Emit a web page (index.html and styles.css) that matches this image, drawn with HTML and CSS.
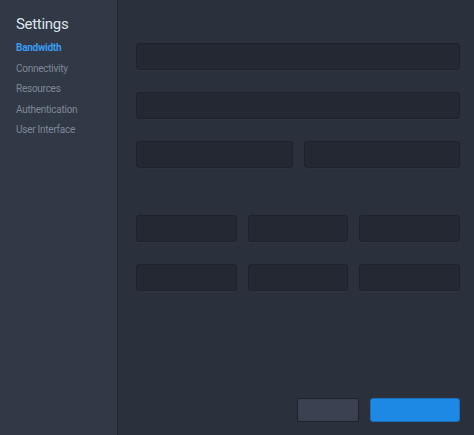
FILE: index.html
```html
<!DOCTYPE html>
<html>
<head>
<meta charset="utf-8">
<link rel="stylesheet" href="styles.css">
</head>
<body>
<div class="app">
  <aside class="sidebar">
    <h1 class="title">Settings</h1>
    <nav class="nav">
      <a class="nav-item active">Bandwidth</a>
      <a class="nav-item">Connectivity</a>
      <a class="nav-item">Resources</a>
      <a class="nav-item">Authentication</a>
      <a class="nav-item">User Interface</a>
    </nav>
  </aside>
  <main class="main">
    <div class="form">
      <div class="field"></div>
      <div class="field"></div>
      <div class="row two">
        <div class="field"></div>
        <div class="field"></div>
      </div>
      <div class="row three section">
        <div class="field"></div>
        <div class="field"></div>
        <div class="field"></div>
      </div>
      <div class="row three">
        <div class="field"></div>
        <div class="field"></div>
        <div class="field"></div>
      </div>
    </div>
    <div class="actions">
      <button class="btn cancel"></button>
      <button class="btn save"></button>
    </div>
  </main>
</div>
</body>
</html>
```
FILE: styles.css
```css
html, body {
  margin: 0;
  padding: 0;
  background: #2a303c;
  font-family: Roboto, "Liberation Sans", sans-serif;
}
.app {
  display: flex;
  width: 474px;
  height: 435px;
}
.sidebar {
  width: 118px;
  background: #313846;
  border-right: 1px solid #22272f;
  padding: 14px 0 0 16px;
  box-sizing: border-box;
  flex-shrink: 0;
}
.title {
  margin: 0 0 4px;
  font-size: 15px;
  letter-spacing: -0.3px;
  font-weight: 400;
  color: #dfe3ea;
  line-height: 20px;
}
.nav {
  display: flex;
  flex-direction: column;
}
.nav-item {
  font-size: 10px;
  letter-spacing: -0.25px;
  line-height: 20.5px;
  color: #7f8898;
}
.nav-item.active {
  color: #3a9df0;
  font-weight: 700;
}
.main {
  flex: 1;
  display: flex;
  flex-direction: column;
  padding: 43px 14px 13px 18px;
  box-sizing: border-box;
}
.form {
  display: flex;
  flex-direction: column;
  gap: 22px;
}
.field {
  height: 27px;
  box-sizing: border-box;
  background: #232833;
  border: 1px solid #1e222a;
  border-radius: 3px;
  box-shadow: 0 1px 0 rgba(255,255,255,0.02);
}
.row {
  display: grid;
  gap: 11px;
}
.row.two { grid-template-columns: 1fr 1fr; }
.row.three { grid-template-columns: 1fr 1fr 1fr; }
.row.section { margin-top: 25px; }
.actions {
  margin-top: auto;
  display: flex;
  justify-content: flex-end;
  gap: 11px;
}
.btn {
  height: 24px;
  border: 1px solid #1e222a;
  border-radius: 3px;
  padding: 0;
}
.btn.cancel {
  width: 62px;
  background: #3a4150;
}
.btn.save {
  width: 90px;
  background: #1e88e5;
  border-color: #1b6fb9;
}
```
